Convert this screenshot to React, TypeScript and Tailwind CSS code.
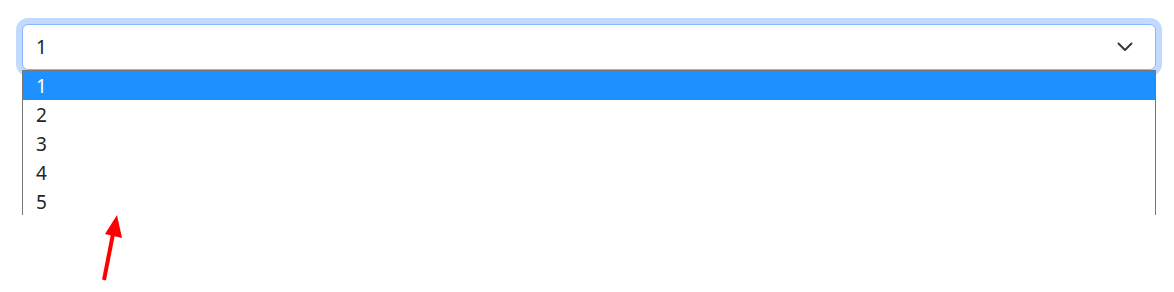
import { useState } from "react";

const options = ["1", "2", "3", "4", "5"];

export default function App() {
  const [selected] = useState("1");

  return (
    <div
      className="relative w-[1174px] h-[292px] bg-white pt-[24px] pl-[22px] pr-[18px]"
      style={{ fontFamily: '"Noto Sans", "Open Sans", sans-serif' }}
    >
      <div className="relative">
        {/* select box with focus ring */}
        <div className="flex items-center justify-between h-[46px] rounded-[6px] border border-[#86b7fe] bg-white pl-[13px] pr-[22px] text-[19px] text-[#212529] shadow-[0_0_0_6px_#c3dafe]">
          <span className="pt-px">{selected}</span>
          <svg width="16" height="10" viewBox="0 0 16 10" fill="none">
            <path
              d="M1.5 1.5 L8 8 L14.5 1.5"
              stroke="#343a40"
              strokeWidth="2"
              strokeLinecap="round"
              strokeLinejoin="round"
            />
          </svg>
        </div>

        {/* open option list */}
        <ul className="absolute left-0 right-0 top-[46px] h-[145px] bg-white border-x border-t border-[#767676] text-[19px]">
          {options.map((o) => (
            <li
              key={o}
              className={
                o === selected
                  ? "h-[29px] leading-[30px] pl-[13px] bg-[#1e90ff] text-white"
                  : "h-[29px] leading-[30px] pl-[13px] text-[#212529]"
              }
            >
              {o}
            </li>
          ))}
        </ul>
      </div>

      {/* annotation arrow */}
      <svg
        className="absolute left-[96px] top-[212px]"
        width="32"
        height="72"
        viewBox="0 0 32 72"
      >
        <line x1="8" y1="68" x2="17" y2="22" stroke="#ff0000" strokeWidth="4" />
        <polygon points="21,3 26,26 9,22" fill="#ff0000" />
      </svg>
    </div>
  );
}
